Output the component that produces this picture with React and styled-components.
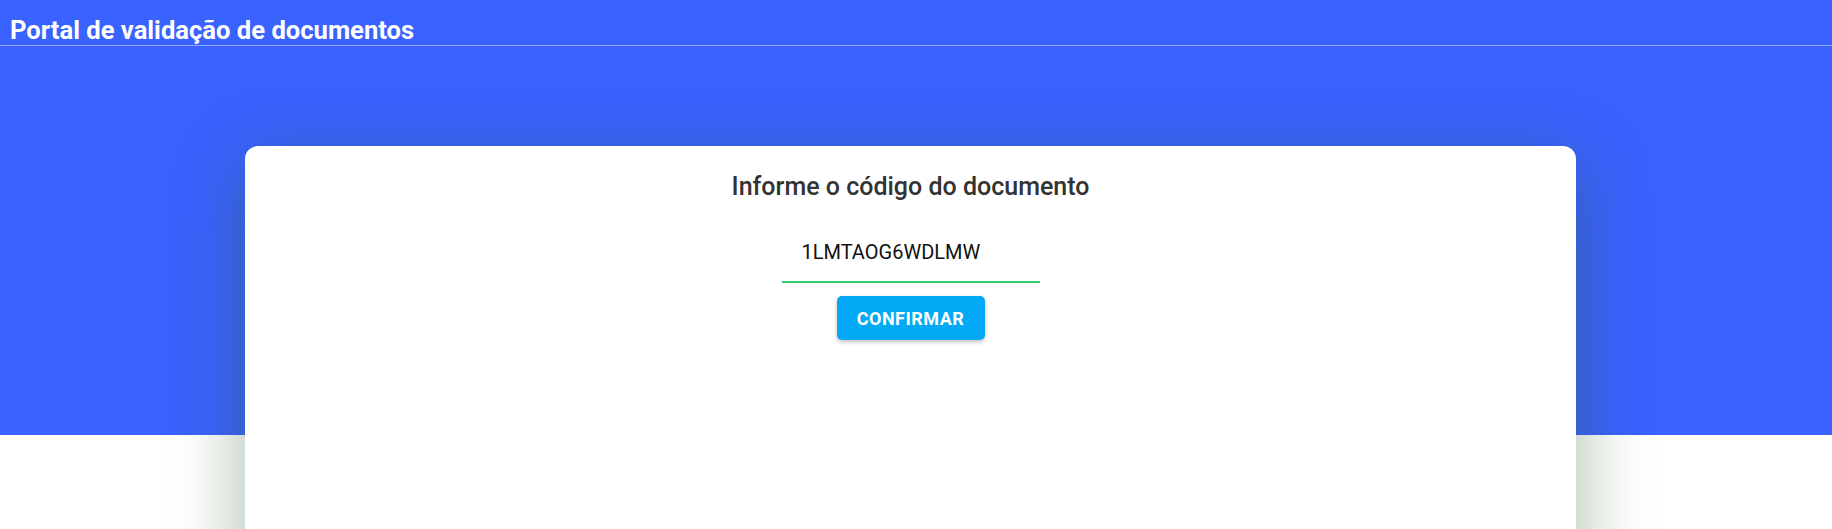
import React, { useState } from 'react';
import styled, { createGlobalStyle } from 'styled-components';

const GlobalStyle = createGlobalStyle`
html, body {
  margin: 0;
  padding: 0;
  background: #ffffff;
  font-family: Roboto, "Liberation Sans", Arial, sans-serif;
  overflow: hidden;
}
`;

const Page = styled.div`
min-height: 529px;
background: linear-gradient(to bottom, #3a62ff 0, #3a62ff 435px, #ffffff 435px);
display: flex;
flex-direction: column;
`;

const TopBar = styled.header`
height: 45px;
padding: 0 10px;
display: flex;
align-items: flex-end;
border-bottom: 1px solid rgba(255, 255, 255, 0.45);
`;

const Title = styled.h1`
margin: 0;
font-size: 25.6px;
line-height: 29px;
font-weight: 700;
color: #ffffff;
`;

const Card = styled.main`
margin: 100px 256px 0 245px;
min-height: 420px;
background: #ffffff;
border-radius: 13px 13px 0 0;
box-shadow: 0 18px 75px rgba(40, 90, 40, 0.42);
display: flex;
flex-direction: column;
align-items: center;
padding-top: 25px;
`;

const CardTitle = styled.h2`
margin: 0;
font-size: 25px;
line-height: 32px;
font-weight: 500;
color: #333333;
`;

const CodeInput = styled.input`
margin-top: 34px;
width: 258px;
height: 46px;
box-sizing: border-box;
padding: 0 20px 14px;
border: none;
border-bottom: 2px solid #2ecc71;
outline: none;
background: transparent;
font-family: Roboto, "Liberation Sans", Arial, sans-serif;
font-size: 20px;
color: #111111;
caret-color: #111111;
`;

const ConfirmButton = styled.button`
margin-top: 13px;
width: 148px;
height: 44px;
border: none;
border-radius: 5px;
background: #03a9f4;
color: #ffffff;
font-family: Roboto, "Liberation Sans", Arial, sans-serif;
font-size: 18px;
font-weight: 700;
letter-spacing: 0.5px;
text-transform: uppercase;
box-shadow: 0 2px 4px rgba(0, 0, 0, 0.25);
cursor: pointer;
`;

function App() {
  const [code, setCode] = useState('1LMTAOG6WDLMW');

  return (
    <Page>
      <GlobalStyle />
      <TopBar>
        <Title>Portal de validação de documentos</Title>
      </TopBar>
      <Card>
        <CardTitle>Informe o código do documento</CardTitle>
        <CodeInput value = {code} onChange = {e => setCode(e.target.value)} autoFocus />
        <ConfirmButton>Confirmar</ConfirmButton>
      </Card>
    </Page>
  );
}

export default App;
